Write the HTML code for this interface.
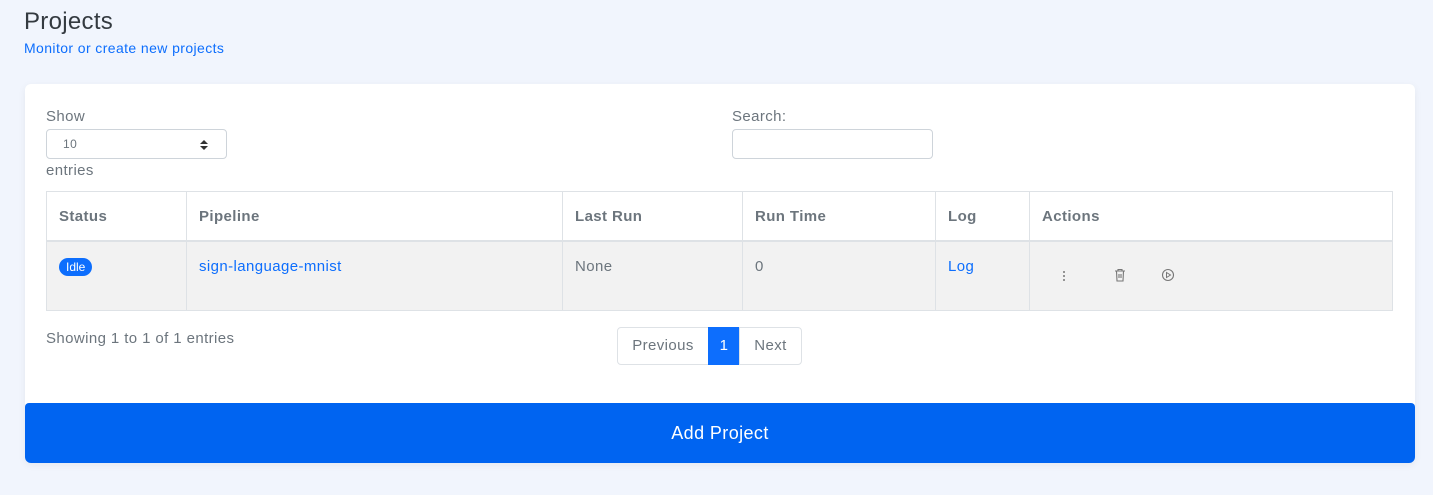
<!DOCTYPE html>
<html><head><style>
body{margin:0;background:#f1f5fd;font-family:"Liberation Sans",sans-serif;width:1433px;height:495px;overflow:hidden;position:relative;color:#6c757d;letter-spacing:0.4px}
.abs{position:absolute}
h1{position:absolute;left:24px;top:8px;margin:0;font-size:24px;font-weight:normal;color:#343a40;letter-spacing:0.3px}
.sub{left:24px;top:40px;font-size:14px;color:#0d6efd}
.card{left:25px;top:84px;width:1390px;height:379px;background:#fff;border-radius:6px;box-shadow:0 2px 8px rgba(0,0,0,.06)}
.lbl{font-size:15px;color:#6c757d}
.sel{left:46px;top:129px;width:179px;height:28px;border:1px solid #ced4da;border-radius:4px;font-size:12px}
table{position:absolute;left:46px;top:191px;width:1347px;border-collapse:collapse;font-size:15px;table-layout:fixed}
th,td{border:1px solid #dee2e6;text-align:left;padding:0 12px}
th{height:48px;color:#6c757d;font-weight:bold;border-bottom:2px solid #dee2e6}
td{height:69px;background:#f2f2f2;vertical-align:top;padding-top:16px;box-sizing:border-box}
a{color:#0d6efd;text-decoration:none}
.badge{background:#0d6efd;color:#fff;font-size:12px;padding:2px 7px;border-radius:9px;letter-spacing:0}
.pg{top:327px;height:38px;border:1px solid #dee2e6;font-size:15px;line-height:36px;text-align:center;box-sizing:border-box}
.btn{left:25px;top:403px;width:1390px;height:60px;background:#0064f1;color:#fff;font-size:18px;text-align:center;line-height:60px;border-radius:4px 4px 6px 6px}
</style></head><body>
<h1>Projects</h1>
<div class="abs sub">Monitor or create new projects</div>
<div class="abs card"></div>
<div class="abs lbl" style="left:46px;top:108px">Show</div>
<div class="abs sel"><span class="abs" style="left:16px;top:7px">10</span>
<svg class="abs" style="left:152px;top:9px" width="10" height="12" viewBox="0 0 10 12"><path d="M1 5L5 1L9 5ZM1 7L5 11L9 7Z" fill="#333"/></svg></div>
<div class="abs lbl" style="left:46px;top:162px">entries</div>
<div class="abs lbl" style="left:732px;top:108px">Search:</div>
<div class="abs" style="left:732px;top:129px;width:199px;height:28px;border:1px solid #ced4da;border-radius:4px"></div>
<table>
<colgroup><col style="width:140px"><col style="width:376px"><col style="width:180px"><col style="width:193px"><col style="width:94px"><col></colgroup>
<tr><th>Status</th><th>Pipeline</th><th>Last Run</th><th>Run Time</th><th>Log</th><th>Actions</th></tr>
<tr><td><span class="badge">Idle</span></td><td><a>sign-language-mnist</a></td><td>None</td><td>0</td><td><a>Log</a></td>
<td style="position:relative">
<svg class="abs" style="left:28px;top:28px" width="12" height="14"><circle cx="6" cy="2" r="1" fill="#777"/><circle cx="6" cy="6" r="1" fill="#777"/><circle cx="6" cy="10" r="1" fill="#777"/></svg>
<svg class="abs" style="left:84px;top:26px" width="12" height="14" viewBox="0 0 12 14"><path d="M1 3H11M4 3V1.5H8V3M2.5 3L3 13H9L9.5 3M5 6V10M7 6V10" fill="none" stroke="#777" stroke-width="1.1"/></svg>
<svg class="abs" style="left:131px;top:26px" width="14" height="14" viewBox="0 0 14 14"><circle cx="7" cy="7" r="5.5" fill="none" stroke="#777" stroke-width="1.1"/><path d="M5.5 4.5L9.5 7L5.5 9.5Z" fill="none" stroke="#777"/></svg>
</td></tr>
</table>
<div class="abs lbl" style="left:46px;top:330px">Showing 1 to 1 of 1 entries</div>
<div class="abs pg" style="left:617px;width:92px;border-radius:4px 0 0 4px">Previous</div>
<div class="abs pg" style="left:708px;width:32px;background:#0d6efd;color:#fff;border-color:#0d6efd">1</div>
<div class="abs pg" style="left:739px;width:63px;border-radius:0 4px 4px 0">Next</div>
<div class="abs btn">Add Project</div>
</body></html>
